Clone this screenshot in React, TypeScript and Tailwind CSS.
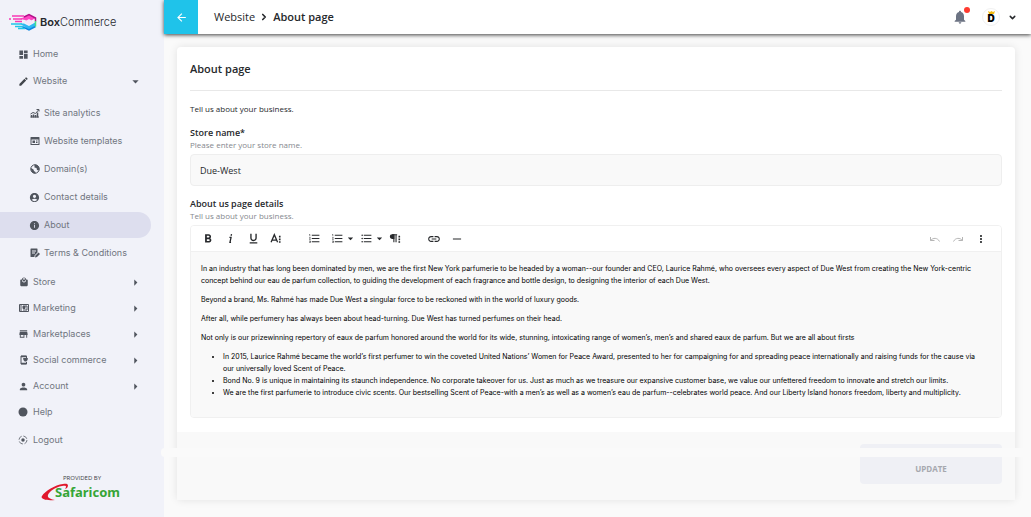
import React, { useState } from 'react';
import {
  MdAccountCircle,
  MdArrowBack,
  MdArrowDropDown,
  MdArrowRight,
  MdDashboard,
  MdEdit,
  MdFormatBold,
  MdFormatListBulleted,
  MdFormatListNumbered,
  MdFormatUnderlined,
  MdInfo,
  MdLink,
  MdLocalMall,
  MdMoreVert,
  MdNotifications,
  MdPerson,
  MdRemove,
  MdStore,
} from 'react-icons/md';
import { ChevronDown, ChevronRight } from 'lucide-react';

interface NavItem {
  label: string;
  icon: React.ReactNode;
  active?: boolean;
}

const AnalyticsIcon = () => (
  <svg viewBox="0 0 20 20" className="size-[10px]" fill="none" stroke="currentColor" strokeWidth="2">
    <path d="M3 19v-5M7 19v-6M11 19v-5M15 19V9" strokeWidth="3" />
    <path d="M1 12l5-3 5 2 6-7M13 3h5v4M1 18h17" />
  </svg>
);

const TemplateIcon = () => (
  <svg viewBox="0 0 20 20" className="size-[10px]" fill="currentColor">
    <path fillRule="evenodd" d="M2 2h16a1 1 0 0 1 1 1v14a1 1 0 0 1-1 1H2a1 1 0 0 1-1-1V3a1 1 0 0 1 1-1zm1 5v9h14V7H3z" />
    <path d="M5 9h5v5H5zM12 9h3v2h-3zM12 12h3v2h-3z" />
  </svg>
);

const DomainIcon = () => (
  <svg viewBox="0 0 20 20" className="size-[10px]">
    <circle cx="10" cy="10" r="8.5" fill="none" stroke="currentColor" strokeWidth="2" />
    <path fill="currentColor" d="M9 1a9 9 0 0 1 9 12l-4-1-1-4-4-1zM2 8l5 3 1 3 3 2v3C5 19 1 14 2 8z" />
  </svg>
);

const TermsIcon = () => (
  <svg viewBox="0 0 20 20" className="size-[10px]" fill="currentColor">
    <path fillRule="evenodd" d="M2 1h12a1 1 0 0 1 1 1v7l-6 6v3H2a1 1 0 0 1-1-1V2a1 1 0 0 1 1-1zm2 4v2h8V5H4zm0 4v2h6V9H4z" />
    <path d="M10 19l1-4 6-6 3 3-6 6z" />
  </svg>
);

const MarketingIcon = () => (
  <svg viewBox="0 0 20 20" className="size-[10px]" fill="none" stroke="currentColor" strokeWidth="2">
    <path d="M1 3h18v14H1zM4 3v14M8 14h8V6h-4" />
    <path d="M8 6h4v5H8z" fill="currentColor" />
  </svg>
);

const SocialIcon = () => (
  <svg viewBox="0 0 20 20" className="size-[10px]" fill="none" stroke="currentColor" strokeWidth="2">
    <path d="M15 6V2H4v16h11v-4" />
    <path d="M4 3h11M4 17h11" strokeWidth="3" />
    <path d="M9 7h8l-2 5h-4z" fill="currentColor" />
  </svg>
);

const LogoutIcon = () => (
  <svg viewBox="0 0 20 20" className="size-[10px]">
    <circle cx="10" cy="10" r="8" fill="none" stroke="currentColor" strokeWidth="1.5" strokeDasharray="9 3.5" />
    <circle cx="10" cy="10" r="3.5" fill="currentColor" />
  </svg>
);

const HelpIcon = () => (
  <svg viewBox="0 0 20 20" className="size-[10px]" fill="currentColor">
    <circle cx="10" cy="10" r="9" />
  </svg>
);

const siteItems: NavItem[] = [
  { label: 'Site analytics', icon: <AnalyticsIcon /> },
  { label: 'Website templates', icon: <TemplateIcon /> },
  { label: 'Domain(s)', icon: <DomainIcon /> },
  { label: 'Contact details', icon: <MdAccountCircle size={11} /> },
  { label: 'About', icon: <MdInfo size={11} />, active: true },
  { label: 'Terms & Conditions', icon: <TermsIcon /> },
];

const groupItems: NavItem[] = [
  { label: 'Store', icon: <MdLocalMall size={10} /> },
  { label: 'Marketing', icon: <MarketingIcon /> },
  { label: 'Marketplaces', icon: <MdStore size={12} /> },
  { label: 'Social commerce', icon: <SocialIcon /> },
  { label: 'Account', icon: <MdPerson size={13} /> },
];

const BoxLogo = () => (
  <svg viewBox="0 0 58 36" className="h-[18px] w-[29px]" fill="none">
    <path d="M24 12L42 3l13 7-13 8-8-4z" fill="#ff45c4" />
    <path d="M32 8l10-5 13 7v7" stroke="#b3138a" strokeWidth="3" />
    <path d="M32 18l10-6 10 6-10 6z" fill="#f6e4f8" />
    <path d="M8 6h24M2 12h4M10 12h18M14 17h14" stroke="#f73ab5" strokeWidth="3" />
    <path d="M24 21h8l10 5 12-7v8l-12 7z" fill="#2fb8f2" />
    <path d="M28 27l14 7 13-7" stroke="#0f86e0" strokeWidth="3" />
    <path d="M55 16v11" stroke="#46e08a" strokeWidth="3" />
    <path d="M6 22h22M14 27h16M20 31h14" stroke="#22c5e8" strokeWidth="3" />
  </svg>
);

const Sidebar: React.FC = () => {
  return (
    <aside className="w-[164px] shrink-0 bg-[#f1f2f9] font-[Inter,sans-serif] text-[9px] text-[#70757e]">
      <div className="flex h-[41px] items-center gap-[3px] pl-2 pt-[3px] text-[#26282d]">
        <BoxLogo />
        <span className="text-[11px]"><b className="font-semibold">Box</b><span className="font-light">Commerce</span></span>
      </div>
      <nav>
        <a href="#home" className="flex h-[26px] items-center gap-1 pl-[18px]">
          <MdDashboard size={11} className="text-[#50555e]" />
          Home
        </a>
        <a href="#website" className="flex h-7 items-center gap-1 pl-[18px] pr-[21px]">
          <MdEdit size={11} className="text-[#42464c]" />
          <span className="grow">Website</span>
          <MdArrowDropDown size={15} className="text-[#50555e]" />
        </a>
        <ul className="mt-[5px] space-y-[2px]">
          {siteItems.map((item) => (
            <li key={item.label} className="pr-[13px]">
              <a
                href="#site"
                className={`flex h-[26px] items-center gap-1 rounded-r-full pl-[29px] ${item.active ? 'bg-[#dddeee]' : ''}`}
              >
                <span className="flex w-[11px] justify-center text-[#50555e]">{item.icon}</span>
                {item.label}
              </a>
            </li>
          ))}
        </ul>
        <ul className="mt-[3px]">
          {groupItems.map((item) => (
            <li key={item.label}>
              <a href="#group" className="flex h-[26px] items-center gap-1 pl-[18px] pr-[21px]">
                <span className="flex w-[11px] justify-center text-[#50555e]">{item.icon}</span>
                <span className="grow">{item.label}</span>
                <MdArrowRight size={15} className="text-[#50555e]" />
              </a>
            </li>
          ))}
        </ul>
        <a href="#help" className="flex h-[26px] items-center gap-[5px] pl-[18px]">
          <span className="text-[#50555e]"><HelpIcon /></span>
          Help
        </a>
        <a href="#logout" className="mt-[2px] flex h-[26px] items-center gap-[5px] pl-[18px]">
          <span className="text-[#50555e]"><LogoutIcon /></span>
          Logout
        </a>
      </nav>
      <div className="mt-5 flex flex-col items-center">
        <span className="font-['Open_Sans',sans-serif] text-[6px] leading-[10px] text-[#3c3e42]">PROVIDED BY</span>
        <div className="flex items-center pr-[3px] text-[#36a536]">
          <svg viewBox="0 0 30 18" className="-mr-4 h-[18px] w-[30px]" fill="#e0182d">
            <path d="M14 17C5 18-1 16 1 13 4 8 14 2 22 1c5-1 6 1 4 4l-2 1c2-3 1-4-3-3C14 4 8 9 7 12c-1 3 3 4 7 5z" />
          </svg>
          <span className="font-['Noto_Sans',sans-serif] text-[13px] font-bold leading-[18px]">Safaricom</span>
        </div>
      </div>
    </aside>
  );
};

const Header: React.FC = () => {
  return (
    <header className="relative z-10 flex h-[34px] items-center bg-white shadow-[0_1px_4px_rgba(0,0,0,0.75)]">
      <button type="button" aria-label="Back" className="flex h-full w-[34px] items-center justify-center bg-[#1fc3ea] text-white">
        <MdArrowBack size={13} />
      </button>
      <div className="ml-4 flex grow items-center gap-1 text-[11px] text-[#26282b]">
        <span>Website</span>
        <ChevronRight size={10} strokeWidth={4} />
        <span className="font-semibold">About page</span>
      </div>
      <button type="button" aria-label="Notifications" className="relative mr-[14px] text-[#6c7383]">
        <MdNotifications size={16} />
        <span className="absolute -right-[2px] -top-[2px] size-[6px] rounded-full bg-[#ff3b30]"></span>
      </button>
      <button type="button" aria-label="Profile" className="mr-[14px] flex items-center gap-2">
        <span className="flex size-[18px] flex-col items-center justify-center rounded-full border border-[#f1f1f1]">
          <svg viewBox="0 0 14 6" className="h-[3px] w-[7px]" fill="#f2b90f">
            <path d="M0 0l4 2 3-2 3 2 4-2-2 6H2z" />
          </svg>
          <b className="font-[Inter,sans-serif] text-[10px] font-black leading-[9px] text-black">D</b>
        </span>
        <ChevronDown size={9} strokeWidth={4} className="text-[#26282b]" />
      </button>
    </header>
  );
};

const Toolbar: React.FC = () => {
  return (
    <div className="flex h-[26px] items-center border-b border-[#f0f0f0] bg-white px-[10px] text-[#26282b]">
      <button type="button" aria-label="Bold" className="w-[23px]"><MdFormatBold size={14} /></button>
      <button type="button" aria-label="Italic" className="flex w-[23px]">
        <svg viewBox="0 0 24 24" className="size-[13px]" fill="none" stroke="currentColor" strokeWidth="2.4">
          <path d="M10 10h3l-2 9h2M14 4l-1 3" />
        </svg>
      </button>
      <button type="button" aria-label="Underline" className="w-[23px]"><MdFormatUnderlined size={13} /></button>
      <button type="button" aria-label="More text" className="flex w-[38px]">
        <svg viewBox="0 0 24 24" className="size-[13px]" fill="none" stroke="currentColor" strokeWidth="2.4">
          <path d="M2 19L8 5l6 14M4 15h8" />
          <path d="M18 7v3M18 12v3M18 17v3" strokeWidth="3" />
        </svg>
      </button>
      <button type="button" aria-label="Numbered list" className="w-[23px]"><MdFormatListNumbered size={13} /></button>
      <button type="button" aria-label="Ordered styles" className="flex w-[29px] items-center">
        <MdFormatListNumbered size={13} />
        <MdArrowDropDown size={13} />
      </button>
      <button type="button" aria-label="Bulleted list" className="flex w-[29px] items-center">
        <MdFormatListBulleted size={13} />
        <MdArrowDropDown size={13} />
      </button>
      <button type="button" aria-label="More paragraph" className="flex w-[38px]">
        <svg viewBox="0 0 24 24" className="size-[13px]" fill="none" stroke="currentColor" strokeWidth="2">
          <path d="M15 5H6M9 5v14M13 5v14" />
          <path d="M6 5h3v7H6a3 3 0 0 1 0-7z" fill="currentColor" />
          <path d="M19 7v3M19 12v3M19 17v3" strokeWidth="3" />
        </svg>
      </button>
      <button type="button" aria-label="Insert link" className="w-[23px]"><MdLink size={14} /></button>
      <button type="button" aria-label="Horizontal line" className="grow"><MdRemove size={14} /></button>
      <button type="button" aria-label="Undo" disabled className="flex w-[23px] text-[#b5b5b5]">
        <svg viewBox="0 0 24 24" className="size-[12px]" fill="none" stroke="currentColor" strokeWidth="2">
          <path d="M3 8v7h8M3 15c5-6 14-6 18 2" />
        </svg>
      </button>
      <button type="button" aria-label="Redo" disabled className="flex w-[23px] text-[#b5b5b5]">
        <svg viewBox="0 0 24 24" className="size-[12px]" fill="none" stroke="currentColor" strokeWidth="2">
          <path d="M21 8v7h-8M21 15c-5-6-14-6-18 2" />
        </svg>
      </button>
      <button type="button" aria-label="More" className="w-[16px]"><MdMoreVert size={12} /></button>
    </div>
  );
};

const App: React.FC = () => {
  const [storeName, setStoreName] = useState('Due-West');

  return (
    <div className="flex min-h-screen bg-[#fafafa] font-['Open_Sans',sans-serif] text-[#26282b]">
      <Sidebar />
      <div className="min-w-0 grow">
        <Header />
        <main className="pb-4 pl-[13px] pr-4 pt-[13px]">
          <form className="rounded-sm bg-white shadow-[0_0_8px_rgba(0,0,0,0.1)]" onSubmit={(e) => e.preventDefault()}>
            <div className="px-[13px] pb-[14px]">
              <h1 className="border-b border-[#e8e8e8] pb-[13px] pt-[14px] text-[11px] font-semibold leading-4">About page</h1>
              <p className="mt-3 text-[8px] leading-[12px]">Tell us about your business.</p>
              <label htmlFor="store-name" className="mt-3 block text-[9px] font-semibold leading-[12px]">Store name*</label>
              <p className="text-[8px] leading-[12px] text-[#85888e]">Please enter your store name.</p>
              <input
                id="store-name"
                value={storeName}
                onChange={(e) => setStoreName(e.target.value)}
                className="mt-[3px] block h-8 w-full rounded-sm border border-[#eeeeee] bg-[#f9f9f9] px-[9px] text-[9px]"
              />
              <h2 className="mt-3 text-[9px] font-semibold leading-[12px]">About us page details</h2>
              <p className="text-[8px] leading-[12px] text-[#85888e]">Tell us about your business.</p>

              <div className="mt-[3px] overflow-hidden rounded border border-[#f0f0f0]">
                <Toolbar />
                <div className="space-y-[7px] bg-[#f9f9f9] pb-[18px] pl-[10px] pr-4 pt-[11px] font-[Inter,sans-serif] text-[7px] leading-[12px] text-black">
                  <p>
                    In an industry that has long been dominated by men, we are the first New York parfumerie to be headed by a woman--our founder and CEO, Laurice Rahmé, who oversees every aspect of Due West from creating the New York-centric concept behind our eau de parfum collection, to guiding the development of each fragrance and bottle design, to designing the interior of each Due West.
                  </p>
                  <p>Beyond a brand, Ms. Rahmé has made Due West a singular force to be reckoned with in the world of luxury goods.</p>
                  <p>After all, while perfumery has always been about head-turning. Due West has turned perfumes on their head.</p>
                  <p>Not only is our prizewinning repertory of eaux de parfum honored around the world for its wide, stunning, intoxicating range of women’s, men’s and shared eaux de parfum. But we are all about firsts</p>
                  <ul className="list-disc pl-[22px]">
                    <li>In 2015, Laurice Rahmé became the world’s first perfumer to win the coveted United Nations’ Women for Peace Award, presented to her for campaigning for and spreading peace internationally and raising funds for the cause via our universally loved Scent of Peace.</li>
                    <li>Bond No. 9 is unique in maintaining its staunch independence. No corporate takeover for us. Just as much as we treasure our expansive customer base, we value our unfettered freedom to innovate and stretch our limits.</li>
                    <li>We are the first parfumerie to introduce civic scents. Our bestselling Scent of Peace-with a men’s as well as a women’s eau de parfum--celebrates world peace. And our Liberty Island honors freedom, liberty and multiplicity.</li>
                  </ul>
                </div>
              </div>
            </div>

            {/* Save bar */}
            <div className="relative flex justify-end bg-[#f9f9f9] px-[13px] pb-4 pt-3">
              <button type="submit" disabled className="h-10 w-[142px] rounded-sm bg-[#eff0f5] pt-[10px] text-[8px] font-bold text-[#a6a8ae]">
                UPDATE
              </button>
              <div className="absolute -left-4 -right-4 top-4 h-[9px] rounded-l bg-[#fafafa]"></div>
            </div>
          </form>
        </main>
      </div>
    </div>
  );
};

export default App;
